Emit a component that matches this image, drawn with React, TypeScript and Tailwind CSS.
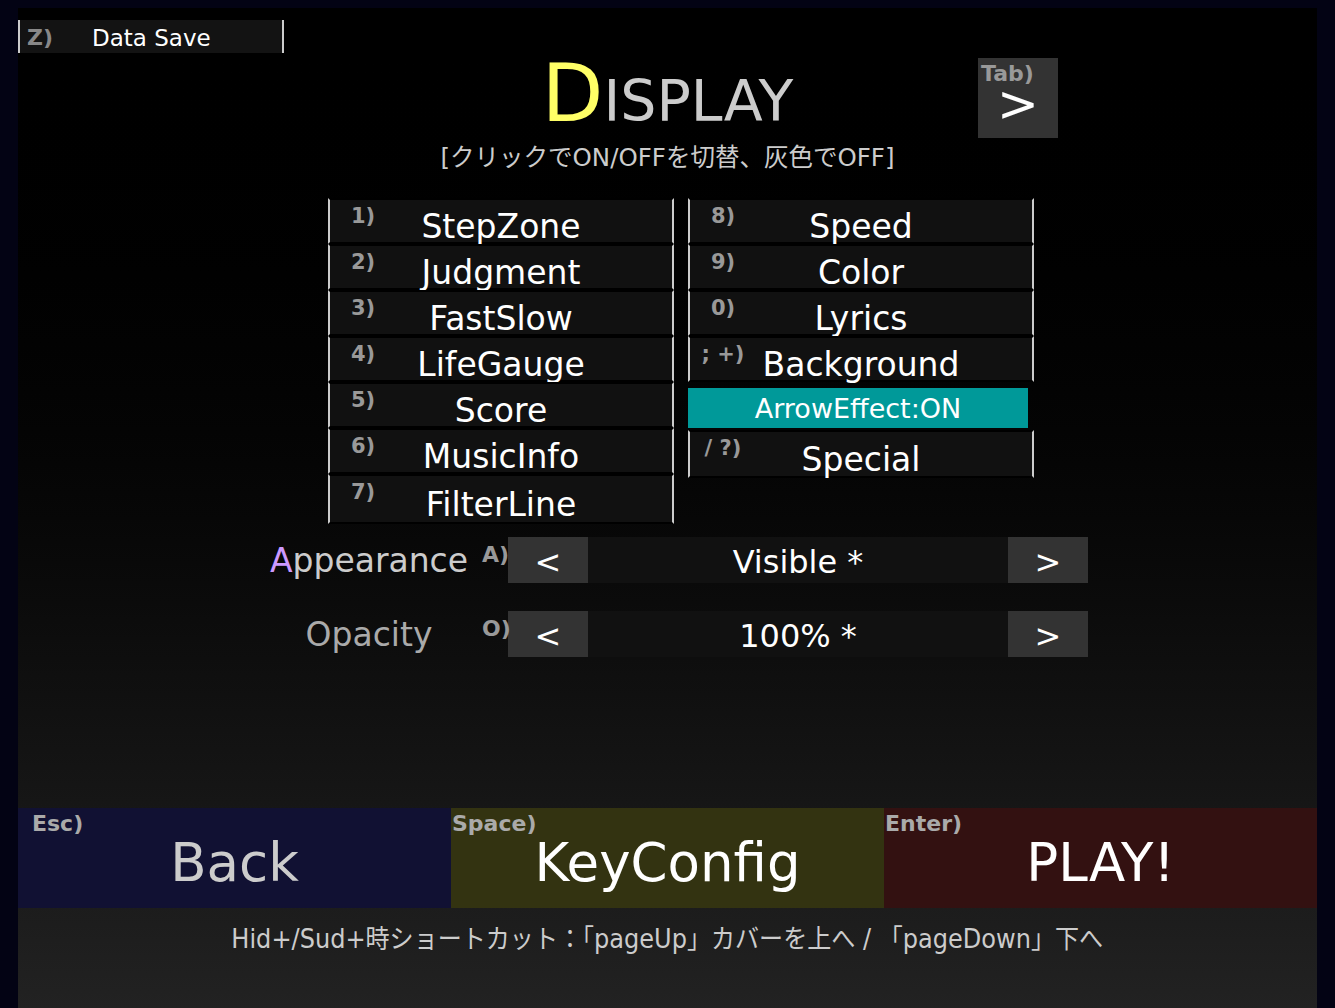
import React from 'react';

// Option rows for the two columns of the display settings
const leftOptions = [
  { k: '1)', label: 'StepZone' },
  { k: '2)', label: 'Judgment' },
  { k: '3)', label: 'FastSlow' },
  { k: '4)', label: 'LifeGauge' },
  { k: '5)', label: 'Score' },
  { k: '6)', label: 'MusicInfo' },
  { k: '7)', label: 'FilterLine', tall: 'h-[50px]' },
];

const rightOptions = [
  { k: '8)', label: 'Speed' },
  { k: '9)', label: 'Color' },
  { k: '0)', label: 'Lyrics' },
  { k: '; +)', label: 'Background' },
  { k: '', label: 'ArrowEffect:ON', on: true },
  { k: '/ ?)', label: 'Special', tall: 'h-[48px]' },
];

function OptionRow({ k, label, on, tall }: { k: string; label: string; on?: boolean; tall?: string }) {
  if (on) {
    return (
      <div className="h-[48px] pt-[6px] pb-[2px]">
        <div className="flex h-[40px] w-[340px] items-center justify-center bg-[#009999] text-[27px] leading-none text-white">
          {label}
        </div>
      </div>
    );
  }
  return (
    <div className={`relative flex w-[346px] items-center justify-center border-x-2 border-y-2 border-x-[#cccccc] border-y-black bg-[#111111] pt-[10px] text-[33px] leading-none text-white ${tall ?? 'h-[46px]'}`}>
      <span className="absolute left-0 top-[6px] w-[66px] whitespace-nowrap text-center text-[21px] font-bold text-[#999999]">{k}</span>
      {label}
    </div>
  );
}

function Setting({ first, rest, firstColor, restColor, k, value }: { first: string; rest: string; firstColor: string; restColor: string; k: string; value: string }) {
  return (
    <div className="flex h-[46px] items-stretch">
      <div className="flex w-[226px] items-center justify-center text-[33px] leading-none">
        <span className={firstColor}>{first}</span>
        <span className={restColor}>{rest}</span>
      </div>
      <span className="relative z-10 w-[26px] whitespace-nowrap pt-[7px] text-[22px] font-bold leading-none text-[#999999]">{k}</span>
      <div className="flex w-[80px] items-center justify-center bg-[#333333] pt-[4px] text-[32px] leading-none text-white">&lt;</div>
      <div className="flex w-[420px] items-center justify-center bg-[#111111] pt-[4px] text-[32px] leading-none text-white">{value}</div>
      <div className="flex w-[80px] items-center justify-center bg-[#333333] pt-[4px] text-[32px] leading-none text-white">&gt;</div>
    </div>
  );
}

function BigButton({ k, label, bg, color, keyPad }: { k: string; label: string; bg: string; color: string; keyPad: string }) {
  return (
    <div className={`relative flex h-[100px] items-center justify-center ${bg}`}>
      <span className={`absolute top-[5px] text-[22px] font-bold leading-none text-[#aaaaaa] ${keyPad}`}>{k}</span>
      <span className={`pt-[8px] text-[53px] leading-none ${color}`}>{label}</span>
    </div>
  );
}

export default function App() {
  return (
    <div className="min-h-screen bg-[#030314] px-[18px] pt-[8px] font-['DejaVu_Sans','Noto_Sans_CJK_JP',sans-serif]">
      <div className="flex h-[1000px] flex-col bg-gradient-to-b from-black to-[#222222]">
        <div className="pt-[12px]">
          <div className="flex h-[33px] w-[266px] items-center border-x-2 border-[#cccccc] bg-[#131313] pt-[3px]">
            <span className="w-[72px] pl-[7px] text-[22px] font-bold leading-none text-[#888888]">Z)</span>
            <span className="text-[23px] leading-none text-white">Data Save</span>
          </div>
        </div>

        <div className="mt-[5px] grid h-[80px] grid-cols-3">
          <div />
          <div className="flex justify-center">
            <div className="-mt-[4px] whitespace-nowrap text-[80px] leading-none text-[#ffff66]">
              D<span className="text-[57px] text-[#cccccc]">ISPLAY</span>
            </div>
          </div>
          <div className="pl-[94px]">
            <div className="flex h-[80px] w-[80px] flex-col bg-[#333333]">
              <span className="pl-[3px] pt-[5px] text-[22px] font-bold leading-none text-[#999999]">Tab)</span>
              <span className="mt-[4px] h-[30px] text-center text-[50px] leading-[30px] text-white">&gt;</span>
            </div>
          </div>
        </div>

        <div className="mt-[6px] text-center text-[24.5px] leading-[28px] text-[#cccccc]">
          [クリックでON/OFFを切替、灰色でOFF]
        </div>

        <div className="mt-[26px] flex gap-[14px] pl-[310px]">
          <div className="flex flex-col">
            {leftOptions.map((o) => (
              <OptionRow key={o.label} k={o.k} label={o.label} tall={o.tall} />
            ))}
          </div>
          <div className="flex flex-col">
            {rightOptions.map((o) => (
              <OptionRow key={o.label} k={o.k} label={o.label} on={o.on} tall={o.tall} />
            ))}
          </div>
        </div>

        <div className="mt-[13px] flex flex-col gap-[28px] pl-[238px]">
          <Setting first="A" rest="ppearance" firstColor="text-[#cc99ff]" restColor="text-[#cccccc]" k="A)" value="Visible *" />
          <Setting first="O" rest="pacity" firstColor="text-[#aaaaaa]" restColor="text-[#aaaaaa]" k="O)" value="100% *" />
        </div>

        <div className="flex-1" />

        <div className="grid grid-cols-3">
          <BigButton k="Esc)" label="Back" bg="bg-[#111133]" color="text-[#cccccc]" keyPad="left-[14px]" />
          <BigButton k="Space)" label="KeyConfig" bg="bg-[#333311]" color="text-white" keyPad="left-[1px]" />
          <BigButton k="Enter)" label="PLAY!" bg="bg-[#331111]" color="text-white" keyPad="left-[1px]" />
        </div>

        <div className="flex h-[100px] justify-center pt-[16px]">
          <span className="scale-x-[0.925] whitespace-nowrap text-[26px] leading-[30px] text-[#cccccc]">
            Hid+/Sud+時ショートカット：「pageUp」カバーを上へ / 「pageDown」下へ
          </span>
        </div>
      </div>
    </div>
  );
}
